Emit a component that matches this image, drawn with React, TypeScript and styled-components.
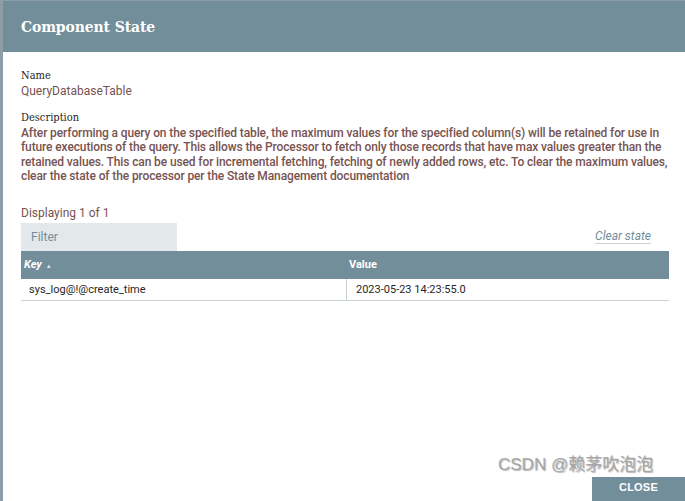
import React from "react";
import styled, { createGlobalStyle } from "styled-components";

const Global = createGlobalStyle`
  html, body {
    margin: 0;
    padding: 0;
    background: #8a9ba6;
  }
  * { box-sizing: border-box; }
`;

const Backdrop = styled.div`
  width: 685px;
  height: 501px;
  padding: 1px 0 0 3px;
  background: #8d9ea8;
  position: relative;
  overflow: hidden;
`;

const Dialog = styled.div`
  height: 100%;
  background: #ffffff;
  display: flex;
  flex-direction: column;
`;

const Header = styled.div`
  height: 51px;
  background: #728e9b;
  display: flex;
  align-items: center;
  padding: 0 0 0 18px;
  flex-shrink: 0;
`;

const Title = styled.h1`
  margin: 0;
  font-family: "DejaVu Serif Condensed", "DejaVu Serif", serif;
  font-stretch: condensed;
  font-weight: bold;
  font-size: 15.5px;
  color: #ffffff;
  letter-spacing: -0.1px;
  margin-top: -1px;
`;

const Body = styled.div`
  flex: 1;
  padding: 17px 16px 0 18px;
  display: flex;
  flex-direction: column;
`;

const Label = styled.div`
  font-family: "DejaVu Serif Condensed", "DejaVu Serif", serif;
  font-stretch: condensed;
  font-size: 11px;
  color: #262626;
  line-height: 14px;
`;

const Value = styled.div<{ $bold?: boolean }>`
  font-family: Roboto, "Liberation Sans", sans-serif;
  font-size: 12px;
  color: #775351;
  font-weight: ${({ $bold }) => ($bold ? 500 : 400)};
  letter-spacing: ${({ $bold }) => ($bold ? "-0.12px" : "0")};
  line-height: 14.5px;
  margin-top: 1px;
`;

const Field = styled.div`
  margin-bottom: 12px;
`;

const Count = styled.div`
  font-family: Roboto, "Liberation Sans", sans-serif;
  font-size: 12px;
  color: #775351;
  margin-top: 10px;
  line-height: 14px;
`;

const Toolbar = styled.div`
  display: flex;
  align-items: flex-end;
  justify-content: space-between;
  margin-top: 3px;
`;

const Filter = styled.div`
  width: 156px;
  height: 28px;
  background: #e3e8eb;
  display: flex;
  align-items: center;
  padding-left: 10px;
  font-family: Roboto, "Liberation Sans", sans-serif;
  font-size: 12px;
  color: #728e9b;
`;

const ClearState = styled.span`
  font-family: Roboto, "Liberation Sans", sans-serif;
  font-style: italic;
  font-size: 12px;
  color: #728e9b;
  border-bottom: 1px solid #c7d2d7;
  margin: 0 18px 7px 0;
  line-height: 14px;
`;

const Table = styled.div`
  display: grid;
  grid-template-columns: 325px 1fr;
  font-family: Roboto, "Liberation Sans", sans-serif;
  font-size: 11px;
`;

const HeadCell = styled.div<{ $italic?: boolean }>`
  height: 28px;
  background: #728e9b;
  color: #ffffff;
  font-weight: bold;
  font-style: ${({ $italic }) => ($italic ? "italic" : "normal")};
  display: flex;
  align-items: center;
  padding-left: 3px;
  gap: 4px;
`;

const SortArrow = styled.span`
  font-size: 6px;
  font-style: normal;
  color: #e3e8eb;
  margin-top: 1px;
`;

const Cell = styled.div<{ $divider?: boolean }>`
  height: 22px;
  display: flex;
  align-items: center;
  padding-left: ${({ $divider }) => ($divider ? "9px" : "8px")};
  border-bottom: 1px solid #c7d2d7;
  border-left: ${({ $divider }) => ($divider ? "1px solid #c7d2d7" : "none")};
  color: #262626;
  font-size: 11px;
`;

const Footer = styled.div`
  display: flex;
  justify-content: flex-end;
`;

const CloseButton = styled.button`
  width: 93px;
  height: 24px;
  border: none;
  background: #728e9b;
  color: #ffffff;
  font-family: "Liberation Sans", Arial, sans-serif;
  font-weight: bold;
  font-size: 11px;
  padding: 0 0 4px;
  letter-spacing: 0.2px;
`;

const Watermark = styled.div`
  position: absolute;
  left: 498px;
  top: 450px;
  font-family: "Liberation Sans", "Noto Sans CJK SC", sans-serif;
  font-size: 17px;
  font-weight: 400;
  color: rgba(160, 160, 160, 0.9);
  text-shadow: 1px 1px 1px rgba(0, 0, 0, 0.3);
  pointer-events: none;
`;

export default function App() {
  return (
    <Backdrop>
      <Global />
      <Dialog>
        <Header>
          <Title>Component State</Title>
        </Header>
        <Body>
          <Field>
            <Label>Name</Label>
            <Value>QueryDatabaseTable</Value>
          </Field>
          <Field>
            <Label>Description</Label>
            <Value $bold>
              After performing a query on the specified table, the maximum values for the specified column(s) will be
              retained for use in future executions of the query. This allows the Processor to fetch only those records
              that have max values greater than the retained values. This can be used for incremental fetching, fetching
              of newly added rows, etc. To clear the maximum values, clear the state of the processor per the State
              Management documentation
            </Value>
          </Field>
          <Count>Displaying 1 of 1</Count>
          <Toolbar>
            <Filter>Filter</Filter>
            <ClearState>Clear state</ClearState>
          </Toolbar>
          <Table>
            <HeadCell $italic>
              Key <SortArrow>▲</SortArrow>
            </HeadCell>
            <HeadCell>Value</HeadCell>
            <Cell>sys_log@!@create_time</Cell>
            <Cell $divider>2023-05-23 14:23:55.0</Cell>
          </Table>
        </Body>
        <Footer>
          <CloseButton>CLOSE</CloseButton>
        </Footer>
      </Dialog>
      <Watermark>CSDN @赖茅吹泡泡</Watermark>
    </Backdrop>
  );
}
